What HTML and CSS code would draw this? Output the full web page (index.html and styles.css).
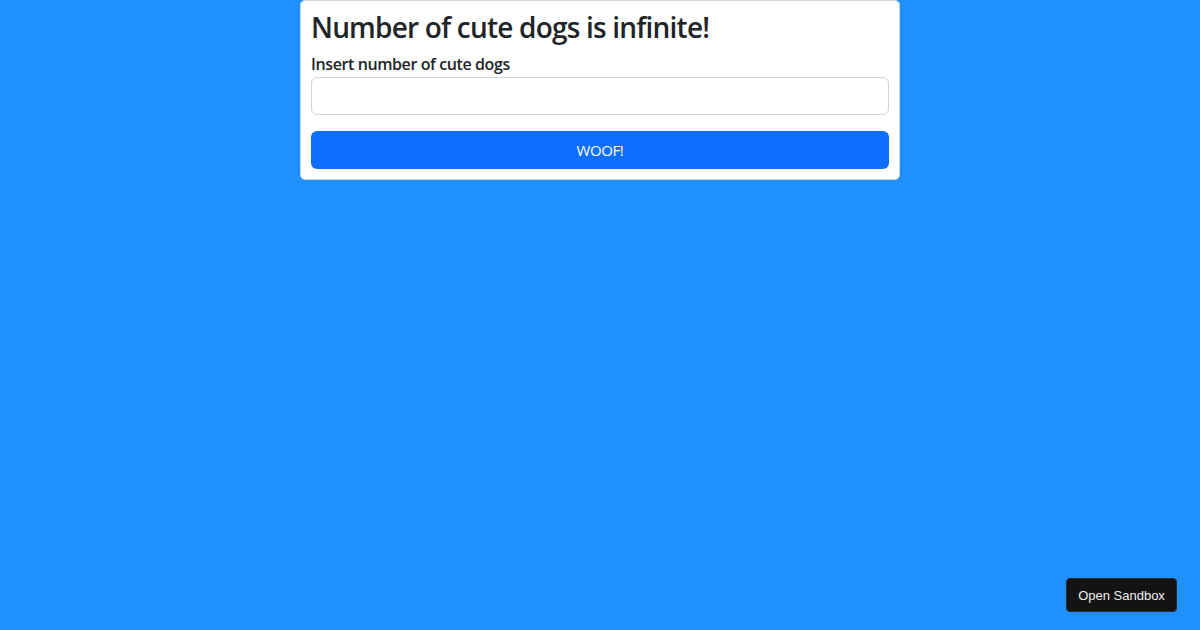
FILE: index.html
```html
<!DOCTYPE html>
<html lang="en">
<head>
<meta charset="utf-8">
<title>Cute dogs</title>
<link rel="stylesheet" href="styles.css">
</head>
<body>
  <main class="page">
    <form class="card">
      <h1 class="title">Number of cute dogs is infinite!</h1>
      <label class="field-label" for="dogs">Insert number of cute dogs</label>
      <input class="field-input" id="dogs" type="text">
      <button class="btn-primary" type="button">WOOF!</button>
    </form>
  </main>
  <a class="sandbox-btn" href="#">Open Sandbox</a>
</body>
</html>
```

FILE: styles.css
```css
* { box-sizing: border-box; }

html, body {
  margin: 0;
  height: 100%;
}

body {
  background: #1e8ffb;
  font-family: "Open Sans", "Noto Sans", sans-serif;
  color: #212529;
}

.page {
  display: flex;
  justify-content: center;
}

.card {
  width: 600px;
  background: #fff;
  border: 1px solid #ced4da;
  border-radius: 5px;
  padding: 10px;
  display: flex;
  flex-direction: column;
}

.title {
  margin: 0 0 9px;
  font-size: 28px;
  font-weight: 600;
  line-height: 32px;
  letter-spacing: -0.8px;
}

.field-label {
  font-size: 16px;
  font-weight: 600;
  line-height: 24px;
  letter-spacing: -0.4px;
  margin-bottom: 1px;
}

.field-input {
  height: 38px;
  border: 1px solid #ced4da;
  border-radius: 6px;
  font: inherit;
  margin-bottom: 16px;
}

.btn-primary {
  height: 38px;
  border: 0;
  border-radius: 6px;
  background: #0d6efd;
  color: #fff;
  font-family: "Open Sans", "Noto Sans", sans-serif;
  font-size: 15px;
  letter-spacing: -0.4px;
}

.sandbox-btn {
  position: fixed;
  right: 23px;
  bottom: 18px;
  width: 111px;
  height: 34px;
  display: flex;
  align-items: center;
  justify-content: center;
  background: #131313;
  border: 1px solid #2a2a2a;
  border-radius: 4px;
  color: #f0f0f0;
  font-family: "Liberation Sans", Arial, sans-serif;
  font-size: 13px;
  text-decoration: none;
}
```
